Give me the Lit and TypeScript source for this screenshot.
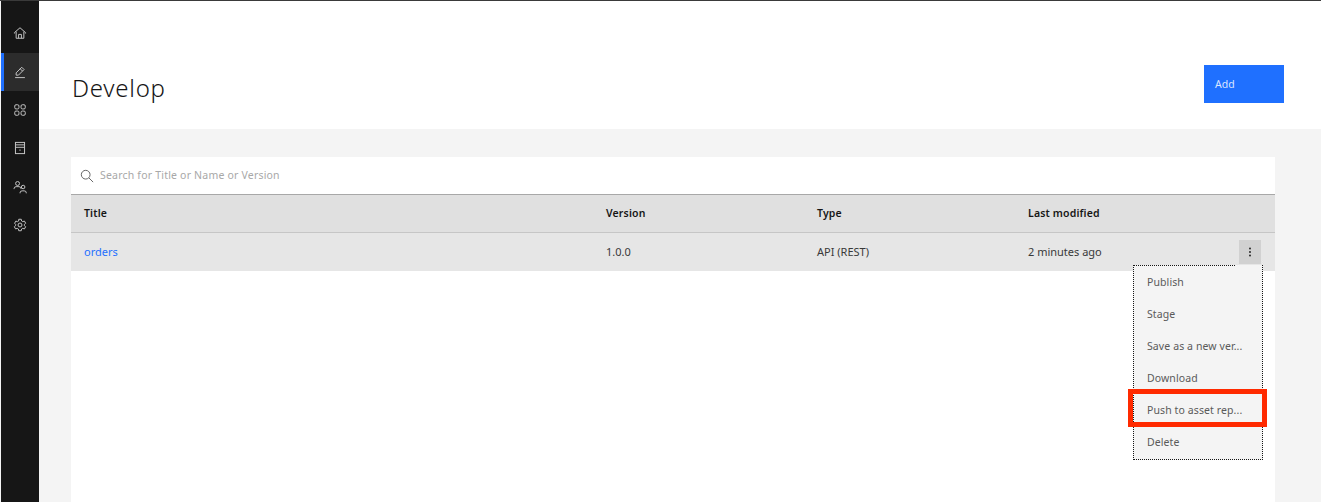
import { LitElement, html, css, svg } from "lit";
import { customElement } from "lit/decorators.js";

const icons = [
  svg`<path d="M10 2.500 2 9.500v1.200M10 2.500l8 7v1.200M4.500 8V17.500h11V8M8 17.500V12h4v5.500" />`,
  svg`<path d="M3 18h14M4.500 14.500v-3.300L12.500 3.200l3.300 3.300-8 8zM10.300 5.400l3.300 3.300" />`,
  svg`<rect x="2.500" y="2.500" width="6" height="6" rx="1.800"/><rect x="11.500" y="2.500" width="6" height="6" rx="1.800"/><rect x="2.500" y="11.500" width="6" height="6" rx="1.800"/><rect x="11.500" y="11.500" width="6" height="6" rx="1.800"/>`,
  svg`<rect x="3.500" y="2" width="13" height="16"/><path d="M3.500 5.500h13M3.500 9h13M9 13h2"/>`,
  svg`<circle cx="6.500" cy="5" r="2.800"/><path d="M1.500 13v-.5a3 3 0 0 1 3-3h4a3 3 0 0 1 3 3v.5"/><circle cx="14.500" cy="10" r="2.500"/><path d="M10 19v-.5a3 3 0 0 1 3-3h3a3 3 0 0 1 3 3v.5"/>`,
  svg`<circle cx="10" cy="10" r="2.800"/><path d="M8.200 1.800h3.600l.5 2.500 1.600.9 2.400-.8 1.800 3.100-1.900 1.700v1.600l1.900 1.700-1.800 3.100-2.400-.8-1.600.9-.5 2.500H8.200l-.5-2.500-1.600-.9-2.400.8-1.800-3.100 1.900-1.700V9.200L2.300 7.500l1.800-3.100 2.400.8 1.600-.9z"/>`,
];

const menuItems = ["Publish", "Stage", "Save as a new ver...", "Download", "Push to asset rep...", "Delete"];

@customElement("app-root")
export class AppRoot extends LitElement {
  static styles = css`
    :host {
      display: block;
      width: 1321px;
      height: 502px;
      overflow: hidden;
      font-family: "Noto Sans", "Open Sans", sans-serif;
      background: #f4f4f4;
      border-top: 1px solid #3a3a3a;
      box-sizing: border-box;
    }
    .shell {
      display: flex;
      height: 501px;
    }
    .rail {
      width: 38px;
      flex: none;
      margin-left: 1px;
      background: #161616;
      padding-top: 13.500px;
      box-sizing: border-box;
    }
    .rail-item {
      height: 38.400px;
      display: flex;
      align-items: center;
      justify-content: center;
      box-sizing: border-box;
      border-left: 3px solid transparent;
      padding: 0 3px 1px 0;
    }
    .rail-item.active {
      background: #2c2c2c;
      border-left-color: #1f70ff;
    }
    .rail-item svg {
      width: 14px;
      height: 14px;
      fill: none;
      stroke: #c6c6c6;
      stroke-width: 1.400;
    }
    .main {
      flex: 1;
      min-width: 0;
    }
    .head {
      height: 128px;
      background: #fff;
      box-sizing: border-box;
      padding: 64px 37px 0 33px;
      display: flex;
      justify-content: space-between;
      align-items: flex-start;
    }
    h1 {
      margin: 7px 0 0;
      font-size: 24px;
      line-height: 32px;
      font-weight: 300;
      color: #161616;
      letter-spacing: 0.750px;
    }
    .add {
      width: 80px;
      height: 38px;
      background: #1f70ff;
      color: #dbe6ff;
      font-size: 10.500px;
      display: flex;
      align-items: center;
      padding-left: 11px;
      box-sizing: border-box;
    }
    .content {
      margin: 28px 46px 0 32px;
      height: 345px;
      background: #fff;
      position: relative;
    }
    .search {
      height: 37px;
      display: flex;
      align-items: center;
      gap: 6px;
      padding-left: 9px;
      border-bottom: 1px solid #a8a8a8;
      color: #a8a8a8;
      font-size: 10.500px;
      letter-spacing: 0.200px;
    }
    .search span {
      padding-bottom: 2px;
    }
    .search svg {
      width: 14px;
      height: 14px;
      fill: none;
      stroke: #525252;
      stroke-width: 1;
    }
    .row {
      display: grid;
      grid-template-columns: 522px 211px 211px 1fr;
      align-items: center;
      font-size: 11px;
      box-sizing: border-box;
      background: #e6e6e6;
      color: #393939;
    }
    .cell {
      padding-left: 13px;
    }
    .row.th {
      height: 38px;
      padding-bottom: 2px;
      background: #e0e0e0;
      border-bottom: 1px solid #c6c6c6;
      color: #161616;
      font-size: 10.500px;
      letter-spacing: 0.150px;
      font-weight: 600;
    }
    .row.td {
      height: 38px;
      padding-bottom: 2px;
      position: relative;
    }
    .link {
      color: #1f70ff;
    }
    .kebab {
      position: absolute;
      right: 14px;
      top: 7px;
      width: 22px;
      height: 24px;
      background: #d1d1d1;
      display: flex;
      align-items: center;
      justify-content: center;
    }
    .kebab svg {
      width: 12px;
      height: 12px;
      fill: #161616;
    }
    .menu {
      position: absolute;
      left: 1062px;
      top: 108px;
      width: 130px;
      height: 195px;
      background: #f4f4f4;
      border: 1px dotted #161616;
      box-sizing: border-box;
    }
    .menu::before {
      content: "";
      position: absolute;
      top: -1px;
      right: 0;
      width: 26px;
      height: 1px;
      background: #f4f4f4;
    }
    .menu-item {
      height: 32px;
      display: flex;
      align-items: center;
      padding: 0 13px;
      font-size: 10.500px;
      color: #5a5a5a;
      letter-spacing: 0.100px;
      white-space: nowrap;
    }
    .highlight {
      position: absolute;
      left: 1057px;
      top: 232px;
      width: 139px;
      height: 38px;
      border: 5px solid #ff2a00;
      box-sizing: border-box;
    }
  `;

  render() {
    return html`
      <div class="shell">
        <nav class="rail">
          ${icons.map(
            (icon, i) => html`<div class="rail-item ${i === 1 ? "active" : ""}">
              <svg viewBox="0 0 20 20">${icon}</svg>
            </div>`
          )}
        </nav>
        <div class="main">
          <header class="head">
            <h1>Develop</h1>
            <div class="add">Add</div>
          </header>
          <section class="content">
            <div class="search">
              <svg viewBox="0 0 16 16"><circle cx="6.500" cy="6.500" r="5"/><path d="M10.200 10.200 15 15"/></svg>
              <span>Search for Title or Name or Version</span>
            </div>
            <div class="row th">
              <div class="cell">Title</div><div class="cell">Version</div><div class="cell">Type</div><div class="cell">Last modified</div>
            </div>
            <div class="row td">
              <div class="cell link">orders</div><div class="cell">1.0.0</div><div class="cell">API (REST)</div><div class="cell">2 minutes ago</div>
              <div class="kebab">
                <svg viewBox="0 0 12 12"><circle cx="6" cy="2.500" r="0.900"/><circle cx="6" cy="6" r="0.900"/><circle cx="6" cy="9.500" r="0.900"/></svg>
              </div>
            </div>
            <div class="menu">
              ${menuItems.map((m) => html`<div class="menu-item">${m}</div>`)}
            </div>
            <div class="highlight"></div>
          </section>
        </div>
      </div>
    `;
  }
}
